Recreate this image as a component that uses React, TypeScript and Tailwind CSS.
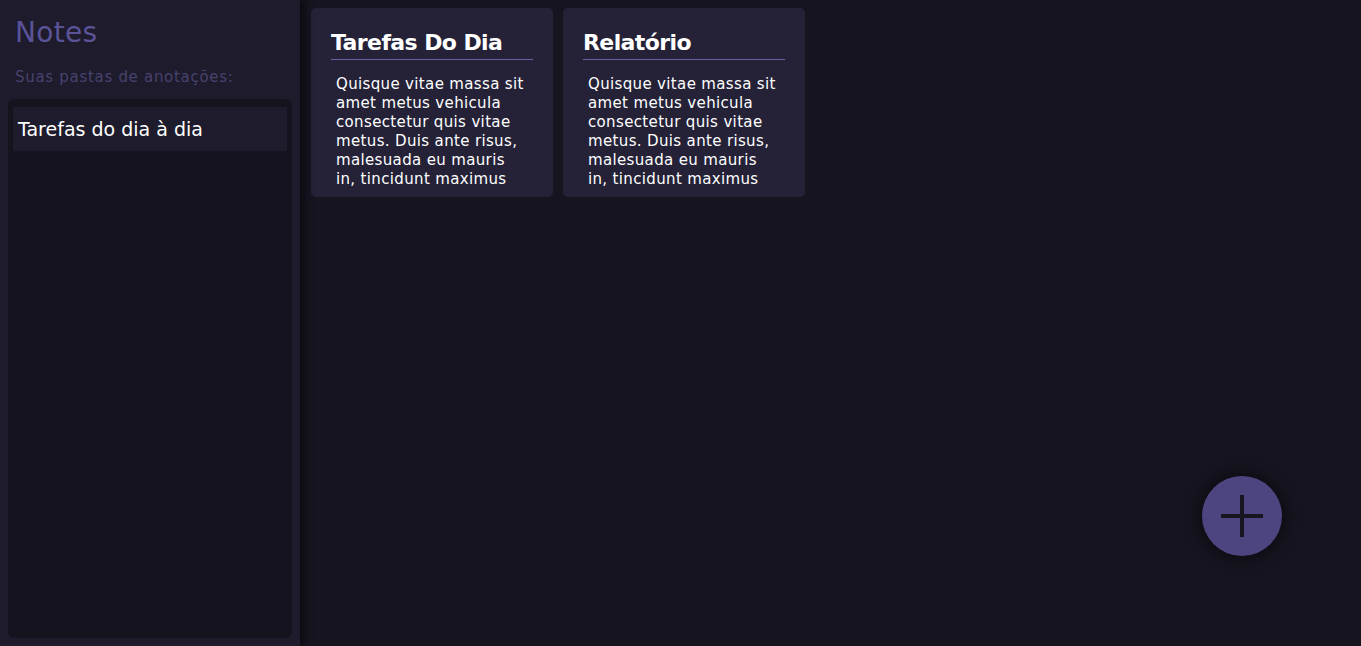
type Note = {
  id: number;
  title: string;
  body: string;
};

const notes: Note[] = [
  {
    id: 1,
    title: 'Tarefas Do Dia',
    body: 'Quisque vitae massa sit amet metus vehicula consectetur quis vitae metus. Duis ante risus, malesuada eu mauris in, tincidunt maximus',
  },
  {
    id: 2,
    title: 'Relatório',
    body: 'Quisque vitae massa sit amet metus vehicula consectetur quis vitae metus. Duis ante risus, malesuada eu mauris in, tincidunt maximus',
  },
];

const folders = ['Tarefas do dia à dia'];

export default function App() {
  return (
    <div
      className="flex h-[646px] w-full overflow-hidden bg-[#16141f]"
      style={{ fontFamily: '"DejaVu Sans", sans-serif' }}
    >
      <aside className="relative z-10 flex w-[300px] shrink-0 flex-col bg-[#1d1b2c] px-2 pb-2 shadow-[4px_0_8px_rgba(0,0,0,0.55)]">
        <h1 className="mt-[15px] px-[7px] text-[28px] leading-[36px] tracking-[0.3px] text-[#5b5398]">Notes</h1>
        <p className="mt-[16px] px-[7px] text-[15px] leading-[20px] tracking-[0.7px] text-[#48426d]">Suas pastas de anotações:</p>
        <div className="mt-[12px] flex-1 rounded-md bg-[#15131e] px-[5px] pt-[8px]">
          {folders.map(folder => (
            <div key={folder} className="flex h-[44px] items-center bg-[#1e1c2c] px-[5px] text-[19px] text-white">
              {folder}
            </div>
          ))}
        </div>
      </aside>

      <main className="relative flex-1 p-[8px] pl-[11px]">
        <div className="flex items-start gap-[10px]">
          {notes.map(note => (
            <div key={note.id} className="h-[189px] w-[242px] rounded-[5px] bg-[#252238] px-5 pt-[20px]">
              <h2 className="border-b border-[#6a60a3] pb-[1px] text-[22px] font-semibold leading-[30px] tracking-[-0.6px] text-white">
                {note.title}
              </h2>
              <p className="mt-[15px] px-[5px] text-[15px] leading-[19px] tracking-[0.35px] text-white">{note.body}</p>
            </div>
          ))}
        </div>

        <button className="absolute left-[902px] top-[476px] flex h-20 w-20 items-center justify-center rounded-full bg-[#4d457f] shadow-[0_0_18px_rgba(0,0,0,0.7)]">
          <svg width="42" height="42" viewBox="0 0 42 42" fill="none" stroke="#17151f" strokeWidth="4">
            <line x1="21" y1="0" x2="21" y2="42" />
            <line x1="0" y1="21" x2="42" y2="21" />
          </svg>
        </button>
      </main>
    </div>
  );
}
